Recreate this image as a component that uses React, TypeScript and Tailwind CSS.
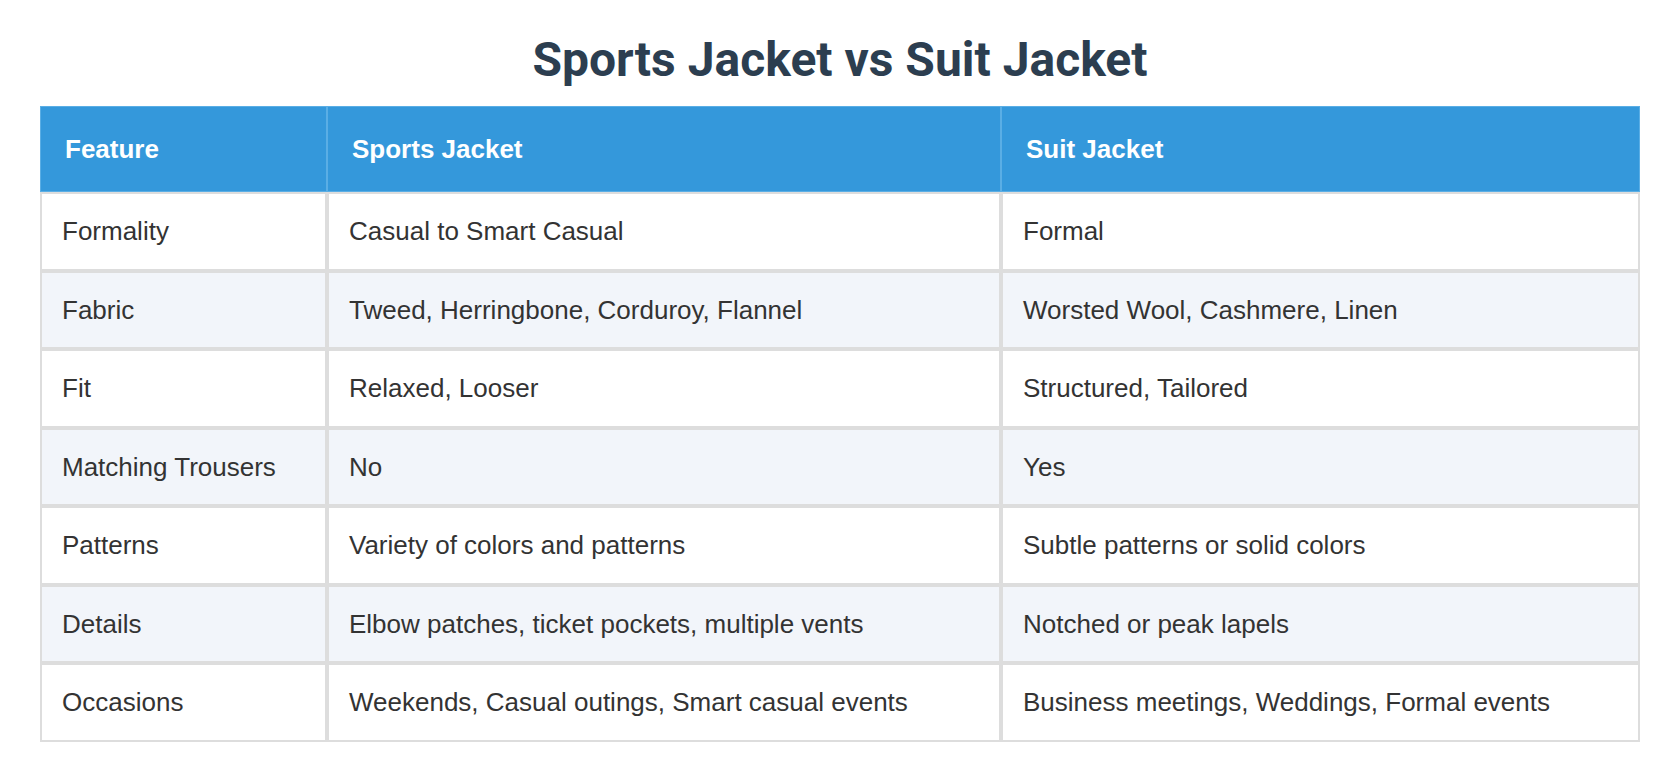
import React from "react";

const rows: [string, string, string][] = [
  ["Formality", "Casual to Smart Casual", "Formal"],
  ["Fabric", "Tweed, Herringbone, Corduroy, Flannel", "Worsted Wool, Cashmere, Linen"],
  ["Fit", "Relaxed, Looser", "Structured, Tailored"],
  ["Matching Trousers", "No", "Yes"],
  ["Patterns", "Variety of colors and patterns", "Subtle patterns or solid colors"],
  ["Details", "Elbow patches, ticket pockets, multiple vents", "Notched or peak lapels"],
  ["Occasions", "Weekends, Casual outings, Smart casual events", "Business meetings, Weddings, Formal events"],
];

export default function App() {
  return (
    <div className="w-[1680px] min-h-[782px] bg-white px-10 pt-[30px]">
      <h1
        className="text-center text-[48px] leading-[60px] font-bold text-[#2c3e50] mb-4"
        style={{ fontFamily: "Roboto, 'Liberation Sans', sans-serif" }}
      >
        Sports Jacket vs Suit Jacket
      </h1>
      <table
        className="w-[1600px] table-fixed border-separate border-spacing-0 text-[26px] leading-[30px] text-[#333333]"
        style={{ fontFamily: "'Liberation Sans', Arial, sans-serif" }}
      >
        <thead>
          <tr className="bg-[#3498db] text-white">
            <th className="w-[287px] text-left font-bold px-6 py-[27px] border border-[#5aaee5]">Feature</th>
            <th className="w-[674px] text-left font-bold px-6 py-[27px] border border-[#5aaee5]">Sports Jacket</th>
            <th className="w-[639px] text-left font-bold px-6 py-[27px] border border-[#5aaee5]">Suit Jacket</th>
          </tr>
        </thead>
        <tbody>
          {rows.map((r, i) => (
            <tr key={i} className={i % 2 === 1 ? "bg-[#f2f5fa]" : "bg-white"}>
              {r.map((c, j) => (
                <td key={j} className="px-5 py-[22.25px] border-2 border-[#dddddd] whitespace-nowrap">
                  {c}
                </td>
              ))}
            </tr>
          ))}
        </tbody>
      </table>
    </div>
  );
}
